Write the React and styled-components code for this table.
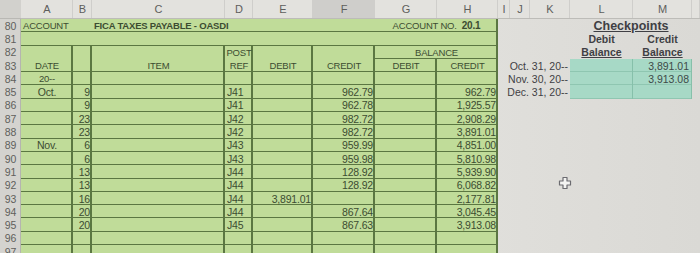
import React from "react";
import styled, { createGlobalStyle, css } from "styled-components";

const GlobalStyle = createGlobalStyle`
 html, body {
  margin: 0;
  padding: 0;
  background: #dcdbd7;
  overflow: hidden;
 }
 body {
  font-family: "Liberation Sans", Arial, sans-serif;
 }
`;

const LINE = "#5b7742";
const INK = "#3c4c31";

// column letters across the top, rowheader column first
const COLUMNS = ["A", "B", "C", "D", "E", "F", "G", "H", "I", "J", "K", "L", "M", ""];
const DATA_ALIGN = ["center", "right", "left", "left", "right", "right", "right", "right"];

//  Ledger body: [date, day, item, ref, debit, credit, balance debit, balance credit]
const entries = [
 ["Oct.", "9", "", "J41", "", "962.79", "", "962.79"],
 ["", "9", "", "J41", "", "962.78", "", "1,925.57"],
 ["", "23", "", "J42", "", "982.72", "", "2,908.29"],
 ["", "23", "", "J42", "", "982.72", "", "3,891.01"],
 ["Nov.", "6", "", "J43", "", "959.99", "", "4,851.00"],
 ["", "6", "", "J43", "", "959.98", "", "5,810.98"],
 ["", "13", "", "J44", "", "128.92", "", "5,939.90"],
 ["", "13", "", "J44", "", "128.92", "", "6,068.82"],
 ["", "16", "", "J44", "3,891.01", "", "", "2,177.81"],
 ["", "20", "", "J44", "", "867.64", "", "3,045.45"],
 ["", "20", "", "J45", "", "867.63", "", "3,913.08"],
 ["", "", "", "", "", "", "", ""],
 ["", "", "", "", "", "", "", ""],
];

const checkpoints = [
 { label: "Oct. 31, 20--", debit: "", credit: "3,891.01" },
 { label: "Nov. 30, 20--", debit: "", credit: "3,913.08" },
 { label: "Dec. 31, 20--", debit: "", credit: "" },
];

const Sheet = styled.div`
 position: relative;
 display: grid;
 grid-template-columns: 21px 52px 19px 133px 28px 60px 62px 62px 61px 12px 20px 40px 63px 59px 8px;
 grid-template-rows: 19px repeat(18, 13.3px);
 width: 700px;
 height: 253px;
 overflow: hidden;
 background: linear-gradient(90deg, #d9d8d4 0%, #e2e1dd 60%, #dad9d5 100%);
`;

const Corner = styled.div`
 grid-row: 1;
 grid-column: 1;
 background: #d2d1cd;
 border-bottom: 1px solid #b9b8b4;
`;

const ColHead = styled.div`
 grid-row: 1;
 grid-column: ${(p) => p.$col};
 display: flex;
 align-items: center;
 justify-content: center;
 font-size: 11px;
 color: #5e5e5c;
 background: ${(p) => (p.$active ? "#cfcecb" : "#e3e2de")};
 border-bottom: 1px solid #bdbcb8;
 box-shadow: inset -1px 0 0 #cfcecb;
`;

const RowHead = styled.div`
 grid-row: ${(p) => p.$row};
 grid-column: 1;
 display: flex;
 align-items: center;
 justify-content: center;
 font-size: 10.5px;
 color: #5f5f5c;
 background: #d4d3cf;
 box-shadow: inset -1px 0 0 #b5b4b0;
`;

const Cell = styled.div`
 grid-row: ${(p) => p.$row};
 grid-column: ${(p) => p.$col} / span ${(p) => p.$span || 1};
 display: flex;
 align-items: center;
 justify-content: ${(p) => (p.$align === "right" ? "flex-end" : p.$align === "center" ? "center" : "flex-start")};
 padding: 0 2px;
 background: #c0dc99;
 color: ${INK};
 font-size: ${(p) => (p.$small ? "9.5px" : "10.5px")};
 font-weight: ${(p) => (p.$bold ? "bold" : "normal")};
 letter-spacing: -0.2px;
 white-space: nowrap;
 box-shadow: ${(p) =>
  [p.$right && `inset -2px 0 0 ${LINE}`, p.$bottom && `inset 0 -1px 0 ${LINE}`].filter(Boolean).join(", ") || "none"};
`;

const Strong = styled.b`
 margin-left: 5px;
 font-size: 10px;
`;

const SideText = styled.div`
 grid-row: ${(p) => p.$row};
 grid-column: ${(p) => p.$col} / span ${(p) => p.$span || 1};
 display: flex;
 align-items: center;
 justify-content: ${(p) => (p.$align === "right" ? "flex-end" : "center")};
 padding-right: ${(p) => (p.$align === "right" ? "2px" : "0")};
 color: #3f3f44;
 white-space: nowrap;
 font-size: ${(p) => (p.$title ? "12.5px" : "10.5px")};
 font-weight: ${(p) => (p.$bold ? "bold" : "normal")};
 ${(p) =>
  p.$underline &&
  css`
   text-decoration: underline;
   text-underline-offset: 1px;
  `}
`;

const CheckCell = styled.div`
 grid-row: ${(p) => p.$row};
 grid-column: ${(p) => p.$col};
 display: flex;
 align-items: center;
 justify-content: flex-end;
 padding-right: 3px;
 font-size: 10.5px;
 color: #3d4a48;
 background: #a7d9c6;
 box-shadow: inset -1px 0 0 #86c0aa, inset 0 -1px 0 #8fc6b1;
`;

const Cursor = styled.svg`
 position: absolute;
 left: 558px;
 top: 176px;
 width: 14px;
 height: 14px;
`;

// builds one ledger row; cells: [{col, span, text, align, ...}]
const LedgerRow = ({ row, cells }) =>
 cells.map((c) => (
  <Cell
   key={`${row}-${c.col}`}
   $row={row}
   $col={c.col}
   $span={c.span}
   $align={c.align}
   $bold={c.bold}
   $small={c.small}
   $right={c.right}
   $bottom={c.bottom}
  >
   {c.text}
  </Cell>
 ));

// col index in the grid: A = 2 ... H = 9
const all = (fill) => [2, 3, 4, 5, 6, 7, 8, 9].map((col, i) => ({ col, ...fill(i) }));

export default function App() {
 const headerRows = [
  {
   n: 80,
   cells: [
    { col: 2, text: "ACCOUNT", small: true, bottom: true },
    { col: 3, bottom: true },
    { col: 4, span: 4, text: "FICA TAXES PAYABLE - OASDI", bold: true, small: true, bottom: true },
    {
     col: 8,
     span: 2,
     align: "center",
     small: true,
     bottom: true,
     right: true,
     text: (
      <>
       ACCOUNT NO.<Strong>20.1</Strong>
      </>
     ),
    },
   ],
  },
  {
   n: 81,
   cells: [2, 3, 4, 5, 6, 7, 8].map((col) => ({ col, bottom: true })).concat({ col: 9, bottom: true, right: true }),
  },
  {
   n: 82,
   cells: [
    { col: 2, right: true },
    { col: 3, right: true },
    { col: 4, right: true },
    { col: 5, right: true, text: "POST", align: "center", small: true },
    { col: 6, right: true },
    { col: 7, right: true },
    { col: 8, span: 2, right: true, bottom: true, text: "BALANCE", align: "center", small: true },
   ],
  },
  {
   n: 83,
   cells: all((i) => ({
    right: true,
    bottom: true,
    align: "center",
    small: true,
    text: ["DATE", "", "ITEM", "REF", "DEBIT", "CREDIT", "DEBIT", "CREDIT"][i],
   })),
  },
  {
   n: 84,
   cells: all((i) => ({ right: true, bottom: true, align: "center", small: true, text: i === 0 ? "20--" : "" })),
  },
 ];

 const bodyRows = entries.map((values, r) => ({
  n: 85 + r,
  cells: all((i) => ({ right: true, bottom: true, align: DATA_ALIGN[i], text: values[i] })),
 }));

 const rows = [...headerRows, ...bodyRows];

 return (
  <>
   <GlobalStyle />
   <Sheet>
    {/* Column letters */}
    <Corner />
    {COLUMNS.map((letter, i) => (
     <ColHead key={i} $col={i + 2} $active={letter === "F"}>
      {letter}
     </ColHead>
    ))}

    {/* Row numbers */}
    {rows.map((r, i) => (
     <RowHead key={r.n} $row={i + 2}>
      {r.n}
     </RowHead>
    ))}

    {/* Ledger */}
    {rows.map((r, i) => (
     <LedgerRow key={r.n} row={i + 2} cells={r.cells} />
    ))}

    {/* Checkpoints */}
    <SideText $row={2} $col={13} $span={2} $title $bold $underline>
     Checkpoints
    </SideText>
    <SideText $row={3} $col={13} $bold>
     Debit
    </SideText>
    <SideText $row={3} $col={14} $bold>
     Credit
    </SideText>
    <SideText $row={4} $col={13} $bold $underline>
     Balance
    </SideText>
    <SideText $row={4} $col={14} $bold $underline>
     Balance
    </SideText>
    {checkpoints.map((cp, i) => (
     <React.Fragment key={cp.label}>
      <SideText $row={5 + i} $col={10} $span={3} $align="right">
       {cp.label}
      </SideText>
      <CheckCell $row={5 + i} $col={13}>
       {cp.debit}
      </CheckCell>
      <CheckCell $row={5 + i} $col={14}>
       {cp.credit}
      </CheckCell>
     </React.Fragment>
    ))}

    {/* mouse cursor */}
    <Cursor viewBox="0 0 14 14">
     <path
      d="M5 1.5h4v3.5h3.5v4H9v3.5H5V9H1.5V5H5z"
      fill="#f4f4f2"
      stroke="#6b6b70"
      strokeWidth="1.2"
      strokeLinejoin="round"
     />
    </Cursor>
   </Sheet>
  </>
 );
}
